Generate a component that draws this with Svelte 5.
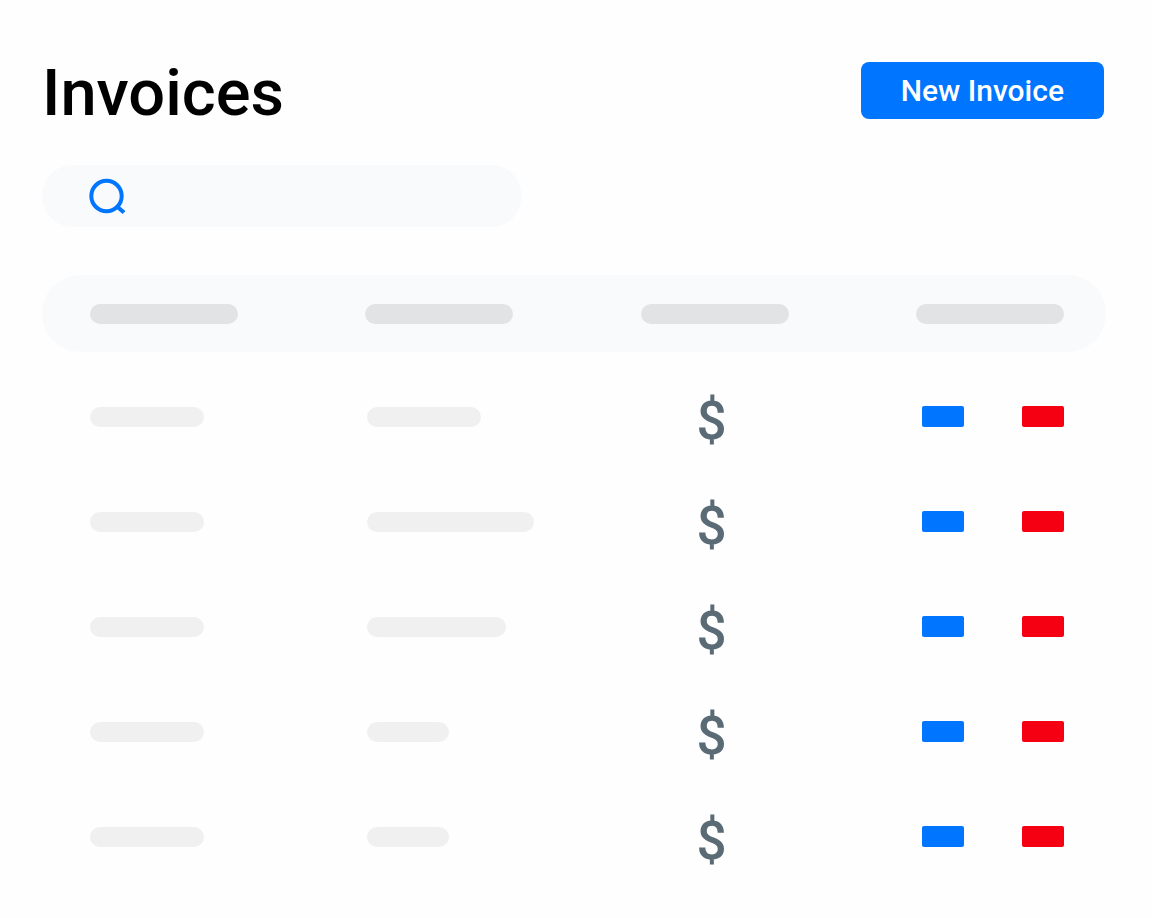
<script>
  const columns = ['Number', 'Client', 'Amount', 'Actions'];

  // Ancho en píxeles de cada barra de texto
  const invoices = [
    { id: 1, number: 114, client: 114 },
    { id: 2, number: 114, client: 167 },
    { id: 3, number: 114, client: 139 },
    { id: 4, number: 114, client: 82 },
    { id: 5, number: 114, client: 82 }
  ];

  let search = $state('');
</script>

<main class="invoices">
  <header class="header">
    <h1>Invoices</h1>
    <button class="new-button" type="button">New Invoice</button>
  </header>

  <label class="search">
    <svg class="search-icon" viewBox="0 0 36 36" aria-hidden="true">
      <circle cx="17.5" cy="18" r="15.2" />
      <path d="M28 28.5 L35 34.5" />
    </svg>
    <input type="search" aria-label="Search" bind:value={search} />
  </label>

  <table>
    <thead>
      <tr>
        {#each columns as column}
          <th scope="col" aria-label={column}><span class="bar"></span></th>
        {/each}
      </tr>
    </thead>
    <tbody>
      {#each invoices as invoice (invoice.id)}
        <tr>
          <td><span class="bar" style="width: {invoice.number}px"></span></td>
          <td class="client"><span class="bar" style="width: {invoice.client}px"></span></td>
          <td><span class="amount">$</span></td>
          <td>
            <div class="actions">
              <button class="action edit" type="button" aria-label="Edit"></button>
              <button class="action delete" type="button" aria-label="Delete"></button>
            </div>
          </td>
        </tr>
      {/each}
    </tbody>
  </table>
</main>

<style>
  :global(body) {
    margin: 0;
    background: #fefefe;
  }

  .invoices {
    padding: 62px 46px 24px 42px;
    font-family: Roboto, "Liberation Sans", sans-serif;
  }

  .header {
    display: flex;
    align-items: flex-start;
    justify-content: space-between;
    padding-right: 2px;
  }

  h1 {
    margin: 0;
    font-size: 65px;
    line-height: 62px;
    font-weight: 500;
    color: #000;
  }

  .new-button {
    height: 57px;
    padding: 0 40px;
    border: none;
    border-radius: 8px;
    background: #0075ff;
    color: #fff;
    font-family: inherit;
    font-size: 30px;
    font-weight: 500;
    cursor: pointer;
  }

  .search {
    display: flex;
    align-items: center;
    gap: 16px;
    box-sizing: border-box;
    width: 480px;
    max-width: 100%;
    height: 62px;
    margin-top: 41px;
    padding: 0 47px;
    border-radius: 31px;
    background: #f9fafc;
  }

  .search-icon {
    flex: none;
    width: 36px;
    height: 36px;
    fill: none;
    stroke: #0075ff;
    stroke-width: 4;
  }

  .search input {
    flex: 1;
    min-width: 0;
    padding: 0;
    border: none;
    outline: none;
    background: transparent;
    font-family: inherit;
    font-size: 30px;
  }

  table {
    width: 100%;
    margin-top: 48px;
    border-collapse: separate;
    border-spacing: 0;
    table-layout: fixed;
  }

  th,
  td {
    box-sizing: border-box;
    padding: 0 0 0 48px;
    text-align: left;
    vertical-align: middle;
  }

  th {
    height: 77px;
    background: #f9fafc;
  }

  th:first-child {
    border-radius: 38px 0 0 38px;
  }

  th:last-child {
    width: 238px;
    border-radius: 0 38px 38px 0;
  }

  tbody::before {
    content: '';
    display: block;
    height: 12px;
  }

  td {
    height: 105px;
  }

  .client {
    padding-left: 50px;
  }

  .bar {
    display: block;
    width: 148px;
    height: 20px;
    border-radius: 10px;
    background: #f0f0f0;
  }

  th .bar {
    background: #e2e3e5;
  }

  .amount {
    display: block;
    width: 142px;
    padding-top: 8px;
    text-align: center;
    font-size: 53px;
    line-height: 64px;
    font-weight: 500;
    color: #5b6b76;
  }

  .actions {
    display: flex;
    justify-content: flex-end;
    gap: 58px;
    width: 148px;
  }

  .action {
    width: 42px;
    height: 21px;
    padding: 0;
    border: none;
    border-radius: 2px;
    cursor: pointer;
  }

  .edit {
    background: #0075ff;
  }

  .delete {
    background: #f40012;
  }
</style>
